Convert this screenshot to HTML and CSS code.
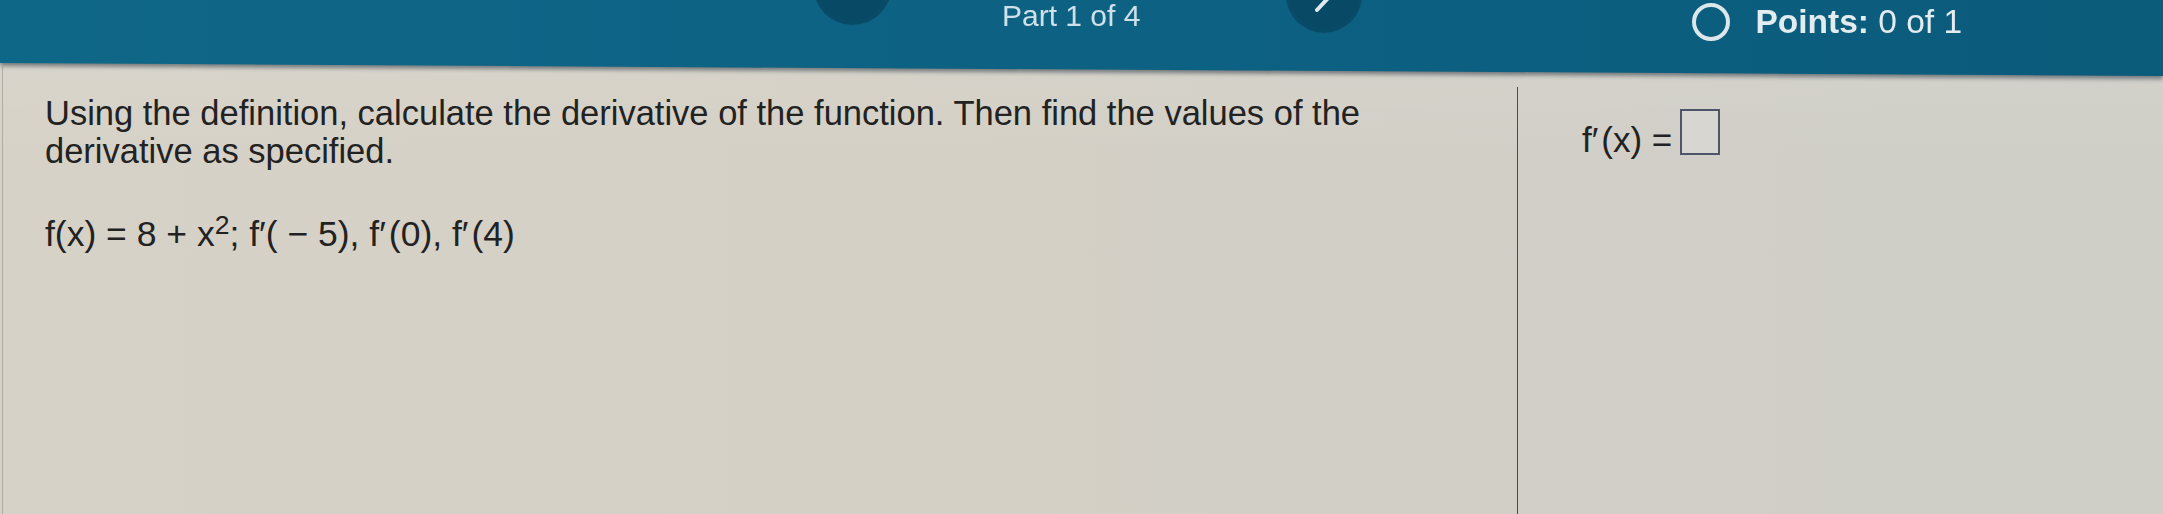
FILE: index.html
```html
<!DOCTYPE html>
<html lang="en">
<head>
<meta charset="utf-8">
<title>Part 1 of 4</title>
<link rel="stylesheet" href="styles.css">
</head>
<body>
<div class="topbar-wrap">
  <header class="topbar">
    <div class="nav-btn prev">
      <svg width="79" height="79" viewBox="0 0 79 79"><polyline points="47,16 33,30.5 47,45" fill="none" stroke="#e0eaee" stroke-width="4" stroke-linecap="round" stroke-linejoin="round"/></svg>
    </div>
    <div class="part">Part 1 of 4</div>
    <div class="nav-btn next">
      <svg width="76" height="76" viewBox="0 0 76 76"><polyline points="31,25 44,39 31,53" fill="none" stroke="#e0eaee" stroke-width="4" stroke-linecap="round" stroke-linejoin="round"/></svg>
    </div>
    <div class="points">
      <span class="ring"></span>
      <span class="points-text"><b>Points:</b> 0 of 1</span>
    </div>
  </header>
</div>
<main class="content">
  <section class="question">
    <p class="prompt">Using the definition, calculate the derivative of the function. Then find the values of the derivative as specified.</p>
    <p class="math-line">f(x) = 8 + x<sup>2</sup>; f′( − 5), f′<span class="pgap"></span>(0), f′<span class="pgap"></span>(4)</p>
  </section>
  <section class="answer">
    <div class="answer-row"><span class="answer-label">f′<span class="pgap"></span>(x) =</span><span class="answer-box"></span></div>
  </section>
</main>
</body>
</html>
```

FILE: styles.css
```css
html, body {
  margin: 0;
  padding: 0;
}
body {
  width: 2163px;
  height: 514px;
  overflow: hidden;
  font-family: "Liberation Sans", Arial, "DejaVu Sans", sans-serif;
  background:
    linear-gradient(180deg, rgba(255,255,255,0.10) 0px, rgba(255,255,255,0) 160px),
    linear-gradient(90deg, #d6d2c8 0%, #d4d0c6 40%, #d1cfc7 75%, #cfcec7 100%);
  color: #222222;
}

/* ---------- top bar ---------- */
.topbar-wrap {
  position: relative;
  z-index: 1;
  filter: drop-shadow(0 3px 2px rgba(35, 50, 60, 0.55));
}
.topbar {
  height: 77px;
  box-sizing: border-box;
  padding-left: 813px;
  display: flex;
  align-items: flex-start;
  background: linear-gradient(90deg, #0f6788 0%, #0d6284 45%, #0b5b7b 100%);
  clip-path: polygon(0 0, 100% 0, 100% 76px, 0 63px);
  overflow: hidden;
}
.nav-btn {
  flex: none;
  border-radius: 50%;
  background: radial-gradient(circle, #084a66 62%, #0a5070 100%);
  display: flex;
  align-items: center;
  justify-content: center;
}
.nav-btn svg { display: block; }
.prev {
  width: 79px;
  height: 79px;
  margin-top: -54px;
}
.next {
  width: 76px;
  height: 76px;
  margin-top: -43px;
  margin-left: 146px;
}
.part {
  flex: none;
  margin-left: 110px;
  margin-top: 1px;
  font-size: 30px;
  line-height: 30px;
  color: #cfe0e8;
  white-space: nowrap;
}
.points {
  flex: none;
  margin-left: 330px;
  display: flex;
  align-items: flex-start;
}
.ring {
  width: 38px;
  height: 38px;
  box-sizing: border-box;
  border: 4px solid #dbe7eb;
  border-radius: 50%;
  margin-top: 3px;
}
.points-text {
  margin-left: 25px;
  margin-top: 6px;
  font-size: 33.5px;
  line-height: 32px;
  color: #e3ecef;
  white-space: nowrap;
}
.points-text b { font-weight: 700; }

/* ---------- content ---------- */
.content {
  display: flex;
  margin-top: -10px;
  margin-left: 2px;
  height: 447px;
  border-left: 1px solid #aeaba4;
}
.question {
  flex: none;
  width: 1514px;
  box-sizing: border-box;
  padding-left: 42px;
}
.prompt {
  margin: 27px 0 0;
  max-width: 1420px;
  font-size: 34.5px;
  line-height: 38px;
}
.math-line {
  margin: 46px 0 0;
  font-size: 35.5px;
  line-height: 37px;
  white-space: nowrap;
}
.math-line sup {
  font-size: 0.75em;
  line-height: 0;
  vertical-align: 0.45em;
}
.pgap {
  display: inline-block;
  width: 3px;
}
.answer {
  flex: 1;
  margin-top: 20px;
  border-left: 1px solid #4b4b4b;
  padding: 22px 0 0 64px;
}
.answer-row {
  font-size: 35px;
  line-height: 40px;
  white-space: nowrap;
}
.answer-box {
  display: inline-block;
  width: 36px;
  height: 42px;
  border: 2px solid #50546a;
  background: #d7d6d0;
  vertical-align: -3px;
  margin-left: 8px;
}
```
